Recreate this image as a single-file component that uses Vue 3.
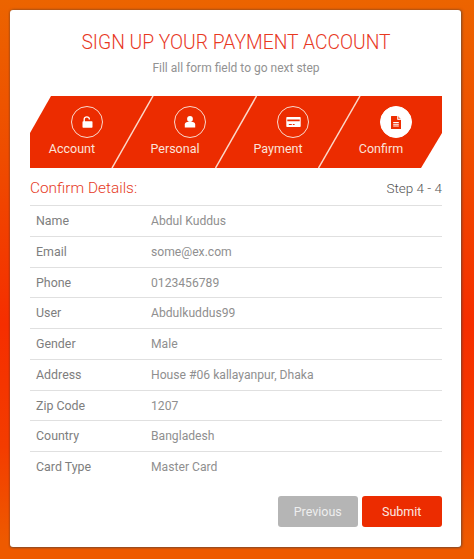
<script setup>
const steps = [
  { label: 'Account', icon: 'lock' },
  { label: 'Personal', icon: 'user' },
  { label: 'Payment', icon: 'card' },
  { label: 'Confirm', icon: 'file', active: true },
]
const rows = [
  ['Name', 'Abdul Kuddus'],
  ['Email', 'some@ex.com'],
  ['Phone', '0123456789'],
  ['User', 'Abdulkuddus99'],
  ['Gender', 'Male'],
  ['Address', 'House #06 kallayanpur, Dhaka'],
  ['Zip Code', '1207'],
  ['Country', 'Bangladesh'],
  ['Card Type', 'Master Card'],
]
</script>

<template>
  <div class="page">
    <main class="card">
      <h1 class="title">SIGN UP YOUR PAYMENT ACCOUNT</h1>
      <p class="subtitle">Fill all form field to go next step</p>

      <div class="bar">
        <div v-for="s in steps" :key="s.label" class="step">
          <span class="badge-wrap">
            <span class="badge" :class="{ active: s.active }">
              <svg v-if="s.icon === 'lock'" width="11" height="12" viewBox="0 0 11 12">
                <path fill="#fff" d="M1.500 5.300V3.400C1.500 1.400 3 .3 4.800.3S8.100 1.400 8.100 3.400H6.700C6.700 2.300 5.900 1.600 4.800 1.600S2.900 2.300 2.900 3.400v1.900H9.800a.7.700 0 0 1 .7.700v5a.7.700 0 0 1-.7.700H1.200a.7.700 0 0 1-.7-.7V6a.7.700 0 0 1 .7-.7z"/>
              </svg>
              <svg v-else-if="s.icon === 'user'" width="12" height="12" viewBox="0 0 12 12">
                <circle fill="#fff" cx="6" cy="3" r="2.900"/>
                <path fill="#fff" d="M.8 11.500V8.500C.8 7 2 6 3.400 6h5.200C10 6 11.200 7 11.200 8.500v3z"/>
              </svg>
              <svg v-else-if="s.icon === 'card'" width="15" height="12" viewBox="0 0 15 12">
                <path fill="#fff" fill-rule="evenodd" d="M1.300 1h12.400c.6 0 1 .4 1 1v8c0 .6-.4 1-1 1H1.300c-.6 0-1-.4-1-1V2c0-.6.4-1 1-1zM1.300 3.500v1.700h12.400V3.500zM2.800 8h3v.9h-3zm4 0h1.800v.9H6.800z"/>
              </svg>
              <svg v-else width="10" height="13" viewBox="0 0 10 13">
                <path fill="#ee2d00" d="M.5 0h5.700v3.300c0 .5.300.8.800.8h3v8.400a.5.500 0 0 1-.5.500H.5a.5.500 0 0 1-.5-.5V.5A.5.500 0 0 1 .5 0z"/>
                <path fill="#f58a6c" d="M7 0l3 3.300H7z"/>
                <path fill="#fff" d="M2.200 6h5.600v.9H2.200zm0 1.800h5.600v.9H2.200zm0 1.800h5.600v.9H2.200z"/>
              </svg>
            </span>
          </span>
          <span class="step-label">{{ s.label }}</span>
        </div>
        <svg class="dividers" width="412" height="72" viewBox="0 0 412 72">
          <line x1="123" y1="0" x2="82" y2="72" />
          <line x1="226.500" y1="0" x2="185.500" y2="72" />
          <line x1="330" y1="0" x2="288.500" y2="72" />
        </svg>
      </div>

      <div class="heading">
        <h2 class="heading-title">Confirm Details:</h2>
        <span class="heading-step">Step 4 - 4</span>
      </div>

      <div class="table">
        <div v-for="r in rows" :key="r[0]" class="row">
          <span class="key">{{ r[0] }}</span>
          <span class="value">{{ r[1] }}</span>
        </div>
      </div>

      <div class="actions">
        <button class="btn prev" type="button">Previous</button>
        <button class="btn submit" type="button">Submit</button>
      </div>
    </main>
  </div>
</template>

<style>
html, body { margin: 0; }
</style>

<style scoped>
.page {
  width: 474px;
  height: 559px;
  box-sizing: border-box;
  padding: 10px 13px 12px 10px;
  background: linear-gradient(180deg, #ec6400 0%, #ef4c00 28%, #f62e00 58%, #f43c00 80%, #ee5a00 97%);
  font-family: Roboto, "Liberation Sans", sans-serif;
}
.card {
  box-sizing: border-box;
  height: 537px;
  padding: 21px 19px 0 20px;
  background: #fff;
  border-radius: 3px;
  box-shadow: 1px 0 3px rgba(90, 70, 60, .6), 0 1px 2px rgba(90, 70, 60, .45), 0 0 2px rgba(90, 70, 60, .5);
}
.title {
  margin: 0;
  height: 24px;
  text-align: center;
  font-size: 19.300px;
  line-height: 24px;
  font-weight: 300;
  color: #e8391f;
}
.subtitle {
  margin: 5px 0 0;
  height: 16px;
  text-align: center;
  font-size: 12px;
  line-height: 16px;
  color: #929292;
}
.bar {
  position: relative;
  display: flex;
  height: 72px;
  margin-top: 20px;
  background: #ec2c00;
  clip-path: polygon(21px 0, 100% 0, 100% 37px, 391px 100%, 0 100%, 0 37px);
}
.step {
  flex: 1;
  display: flex;
  flex-direction: column;
  align-items: center;
  padding-top: 10px;
}
.badge-wrap {
  display: flex;
  padding-left: 11px;
}
.badge {
  box-sizing: border-box;
  width: 32px;
  height: 32px;
  display: flex;
  align-items: center;
  justify-content: center;
  border: 1px solid #f9d9cc;
  border-radius: 50%;
}
.badge.active {
  background: #fff;
  border-color: #fff;
}
.step-label {
  margin-top: 2px;
  padding-right: 19px;
  font-size: 12.500px;
  line-height: 18px;
  color: #fbe3da;
}
.dividers {
  position: absolute;
  left: 0;
  top: 0;
}
.dividers line {
  stroke: #fbd9ca;
  stroke-width: 1.500;
}
.heading {
  box-sizing: border-box;
  display: flex;
  justify-content: space-between;
  align-items: center;
  height: 37px;
  padding-top: 2px;
}
.heading-title {
  margin: 0;
  font-size: 15.400px;
  font-weight: 300;
  color: #e63a1e;
}
.heading-step {
  font-size: 13.500px;
  font-weight: 300;
  color: #555;
}
.row {
  box-sizing: border-box;
  height: 30.750px;
  display: flex;
  align-items: baseline;
  padding: 7px 0 0 6px;
  line-height: 16px;
  border-top: 1px solid #e0e0e0;
}
.key {
  width: 115px;
  font-size: 12.400px;
  color: #7e7e7e;
}
.value {
  font-size: 12.150px;
  color: #8f8f8f;
}
.actions {
  display: flex;
  justify-content: flex-end;
  gap: 3.500px;
  margin-top: 14px;
}
.btn {
  box-sizing: border-box;
  width: 80.500px;
  height: 31px;
  border: 0;
  border-radius: 3px;
  font-family: inherit;
  font-size: 12.500px;
  color: #fbe8e0;
}
.prev {
  background: #b5b5b5;
  color: #eee;
}
.submit {
  background: #ec2c00;
}
</style>
